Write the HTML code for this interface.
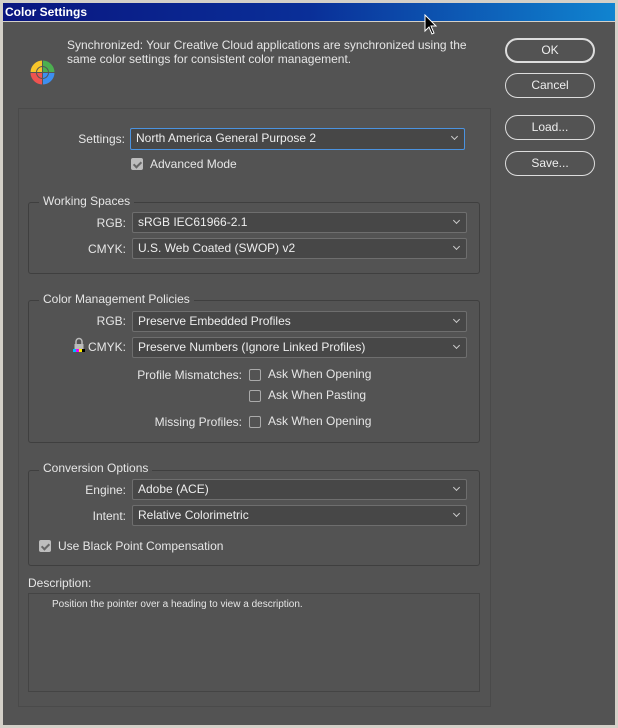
<!DOCTYPE html><html><head><style>
*{box-sizing:border-box;margin:0;padding:0}
body{width:618px;height:728px;background:#d4d0c8;font-family:"Liberation Sans",sans-serif;font-size:12px;color:#e6e6e6;overflow:hidden;position:relative}
.win{position:absolute;left:3px;top:22px;width:612px;height:703px;background:#535353}
.title{position:absolute;left:3px;top:3px;width:612px;height:18px;background:linear-gradient(90deg,#0a1680,#0a2f98 50%,#1084d0);color:#fff;font-weight:bold;font-size:12px;line-height:18px;padding-left:2px}
.a{position:absolute;white-space:nowrap}
.box{position:absolute;border:1px solid #3f3f3f;border-radius:3px}
.dd{position:absolute;height:21px;background:#474747;border:1px solid #6e6e6e;border-radius:2px;padding-left:5px;line-height:19px;color:#eee}
.dd:after{content:"";position:absolute;right:7px;top:5px;width:4px;height:4px;border-right:1px solid #ccc;border-bottom:1px solid #ccc;transform:rotate(45deg)}
.lg{position:absolute;background:#535353;padding:0 4px;line-height:14px}
.r{position:absolute;text-align:right;line-height:14px}
.cb{position:absolute;width:12px;height:12px;border:1px solid #aaa;border-radius:2px}
.cb.on{background:#bdbdbd;border-color:#bdbdbd}
.cb.on:after{content:"";position:absolute;left:3px;top:1px;width:3px;height:6px;border-right:2px solid #666;border-bottom:2px solid #666;transform:rotate(45deg)}
.btn{position:absolute;left:505px;width:90px;height:25px;border:1px solid #ddd;border-radius:13px;text-align:center;line-height:23px;color:#eee}
</style></head><body>
<div class="title">Color Settings</div>
<div class="win"></div>
<svg class="a" style="left:30px;top:60px" width="25" height="25" viewBox="0 0 25 25">
<path d="M12.5 12.5V0.5A12 12 0 0 0 0.5 12.5Z" fill="#f7c52a"/><path d="M12.5 12.5V0.5A12 12 0 0 1 24.5 12.5Z" fill="#4caf50"/><path d="M12.5 12.5H0.5A12 12 0 0 0 12.5 24.5Z" fill="#ef5350"/><path d="M12.5 12.5H24.5A12 12 0 0 1 12.5 24.5Z" fill="#3d8ff0"/>
<circle cx="12.5" cy="12.5" r="6" fill="none" stroke="#555" stroke-width="1"/><path d="M12.5 0.5V24.5M0.5 12.5H24.5" stroke="#555" stroke-width="1"/></svg>
<div class="a" style="left:67px;top:38px;line-height:14px">Synchronized: Your Creative Cloud applications are synchronized using the<br>same color settings for consistent color management.</div>
<div class="btn" style="top:38px;height:25px;border-width:2px;line-height:21px">OK</div>
<div class="btn" style="top:73px">Cancel</div>
<div class="btn" style="top:115px">Load...</div>
<div class="btn" style="top:151px">Save...</div>
<div class="box" style="left:18px;top:108px;width:473px;height:599px;border-color:#4a4a4a;border-radius:0"></div>
<div class="r" style="left:40px;width:85px;top:132px">Settings:</div>
<div class="dd" style="left:130px;top:128px;width:335px;height:22px;border-color:#4b93e0">North America General Purpose 2</div>
<div class="cb on" style="left:131px;top:158px"></div><div class="a" style="left:150px;top:157px">Advanced Mode</div>
<div class="box" style="left:28px;top:202px;width:452px;height:72px"></div><div class="lg" style="left:39px;top:194px">Working Spaces</div>
<div class="r" style="left:40px;width:86px;top:216px">RGB:</div><div class="dd" style="left:132px;top:212px;width:335px">sRGB IEC61966-2.1</div>
<div class="r" style="left:40px;width:86px;top:242px">CMYK:</div><div class="dd" style="left:132px;top:238px;width:335px">U.S. Web Coated (SWOP) v2</div>
<div class="box" style="left:28px;top:300px;width:452px;height:143px"></div><div class="lg" style="left:39px;top:292px">Color Management Policies</div>
<div class="r" style="left:40px;width:86px;top:314px">RGB:</div><div class="dd" style="left:132px;top:311px;width:335px">Preserve Embedded Profiles</div>
<svg class="a" style="left:72px;top:337px" width="14" height="16"><path d="M4 7V4.5a3 3 0 0 1 6 0V7" fill="none" stroke="#bbb" stroke-width="1.5"/><rect x="2.5" y="7" width="9" height="5" fill="#bbb"/><rect x="1" y="12" width="3" height="3" fill="#0bf"/><rect x="4" y="12" width="3" height="3" fill="#e0f"/><rect x="7" y="12" width="3" height="3" fill="#fe0"/><rect x="10" y="12" width="3" height="3" fill="#000"/></svg>
<div class="r" style="left:40px;width:86px;top:340px">CMYK:</div><div class="dd" style="left:132px;top:337px;width:335px">Preserve Numbers (Ignore Linked Profiles)</div>
<div class="r" style="left:100px;width:142px;top:368px">Profile Mismatches:</div>
<div class="cb" style="left:249px;top:369px"></div><div class="a" style="left:268px;top:367px">Ask When Opening</div>
<div class="cb" style="left:249px;top:390px"></div><div class="a" style="left:268px;top:388px">Ask When Pasting</div>
<div class="r" style="left:100px;width:142px;top:415px">Missing Profiles:</div>
<div class="cb" style="left:249px;top:416px"></div><div class="a" style="left:268px;top:414px">Ask When Opening</div>
<div class="box" style="left:28px;top:470px;width:452px;height:96px"></div><div class="lg" style="left:39px;top:461px">Conversion Options</div>
<div class="r" style="left:40px;width:86px;top:483px">Engine:</div><div class="dd" style="left:132px;top:479px;width:335px">Adobe (ACE)</div>
<div class="r" style="left:40px;width:86px;top:509px">Intent:</div><div class="dd" style="left:132px;top:505px;width:335px">Relative Colorimetric</div>
<div class="cb on" style="left:39px;top:540px"></div><div class="a" style="left:58px;top:539px">Use Black Point Compensation</div>
<div class="a" style="left:28px;top:576px">Description:</div>
<div class="box" style="left:28px;top:593px;width:452px;height:99px;border-color:#444;border-radius:0"></div>
<div class="a" style="left:52px;top:599px;font-size:10px">Position the pointer over a heading to view a description.</div>
<svg class="a" style="left:424px;top:14px" width="14" height="22"><path d="M1 1V17L5 13L8 20L10 19L7 12H12Z" fill="#000" stroke="#fff" stroke-width="1"/></svg>
</body></html>
